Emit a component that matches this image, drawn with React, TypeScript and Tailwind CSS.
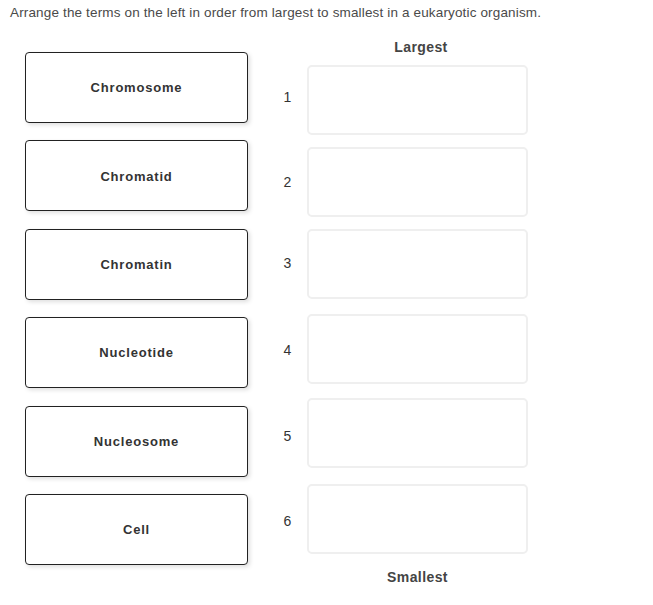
import React from 'react'

const terms = ["Chromosome", "Chromatid", "Chromatin", "Nucleotide", "Nucleosome", "Cell"]

// right column: slot rows, gap above each box and nudge of the number
const slots = [
    { n: 1, mt: "mt-[10px]", num: "-translate-y-[3px]" },
    { n: 2, mt: "mt-[12px]", num: "translate-y-[0px]" },
    { n: 3, mt: "mt-[12px]", num: "-translate-y-[1px]" },
    { n: 4, mt: "mt-[15px]", num: "translate-y-[1px]" },
    { n: 5, mt: "mt-[14px]", num: "translate-y-[3px]" },
    { n: 6, mt: "mt-[16px]", num: "translate-y-[2px]" },
]

export default function App() {
    return (
        <div className="w-[653px] h-[605px] bg-white font-['Liberation_Sans',Arial,sans-serif]">
            <p className="pt-[4px] pl-[10px] text-[13.5px] leading-[18px] tracking-[0.15px] text-[#4a4a4a]">
                Arrange the terms on the left in order from largest to smallest in a eukaryotic organism.
            </p>
            <div className="flex items-start pl-[25px]">
                <div className="mt-[30px] flex flex-col gap-[17.4px]">
                    {terms.map((t) => (
                        <div
                            key={t}
                            className="w-[223px] h-[71px] flex items-center justify-center rounded-[4px] border border-[#222] bg-white shadow-[2px_2px_4px_rgba(0,0,0,0.13)]"
                        >
                            <span className="pt-[1px] text-[13px] font-bold tracking-[0.8px] text-[#333]">{t}</span>
                        </div>
                    ))}
                </div>
                <div className="ml-[20px] flex flex-col">
                    <div className="mt-[17px] pl-[46px] w-[260px] text-center text-[14px] leading-[16px] font-bold tracking-[0.4px] text-[#444]">
                        Largest
                    </div>
                    {slots.map((s) => (
                        <div key={s.n} className={`flex items-center ${s.mt}`}>
                            <div className={`w-[39px] text-center text-[14px] text-[#333] ${s.num}`}>{s.n}</div>
                            <div className="w-[221px] h-[70px] rounded-[5px] border-2 border-[#efefef] bg-white" />
                        </div>
                    ))}
                    <div className="mt-[15px] pl-[39px] w-[260px] text-center text-[14px] leading-[16px] font-bold tracking-[0.4px] text-[#444]">
                        Smallest
                    </div>
                </div>
            </div>
        </div>
    )
}
